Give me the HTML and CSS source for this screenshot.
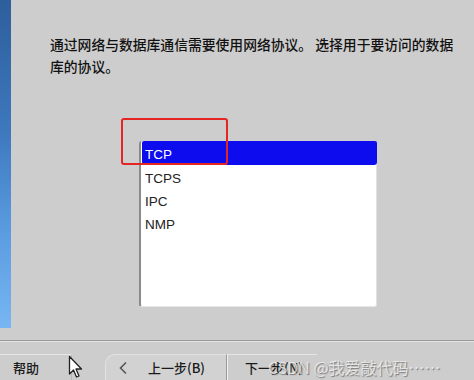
FILE: index.html
```html
<!DOCTYPE html>
<html lang="zh">
<head>
<meta charset="utf-8">
<link rel="stylesheet" href="styles.css">
</head>
<body>
<div class="window">
  <div class="main">
    <div class="sidebar"></div>
    <div class="content">
      <p class="intro">通过网络与数据库通信需要使用网络协议。 选择用于要访问的数据库的协议。</p>
      <div class="list-wrap">
        <ul class="listbox">
          <li class="item selected">TCP</li>
          <li class="item">TCPS</li>
          <li class="item">IPC</li>
          <li class="item">NMP</li>
        </ul>
        <div class="highlight"></div>
      </div>
    </div>
  </div>
  <div class="footer">
    <div class="btn help">帮助</div>
    <div class="btn prev">
      <svg class="chev" width="10" height="14" viewBox="0 0 10 14"><path d="M8 1.5 L2.5 7 L8 12.5" fill="none" stroke="#555" stroke-width="1.6"/></svg>
      <span>上一步(B)</span>
    </div>
    <div class="btn next">下一步(N)</div>
    <svg class="cursor" width="16" height="24" viewBox="0 0 16 24"><path d="M1.5 1.5 L1.5 19 L5.5 15 L8.5 22 L11 21 L8 14 L13.5 14 Z" fill="#fff" stroke="#222" stroke-width="1.3" stroke-linejoin="round"/></svg>
    <div class="watermark">CSDN @我爱敲代码……</div>
  </div>
</div>
</body>
</html>
```

FILE: styles.css
```css
html, body {
  margin: 0;
  padding: 0;
}
body {
  width: 474px;
  height: 380px;
  overflow: hidden;
  background: #cdcdcd;
  font-family: "Noto Sans CJK SC", "Liberation Sans", sans-serif;
}
.window {
  display: flex;
  flex-direction: column;
  height: 380px;
}
.main {
  display: flex;
  height: 340px;
  align-items: flex-start;
}
.sidebar {
  width: 11px;
  height: 328px;
  background: linear-gradient(180deg, #2d5f9c 0%, #3d78bd 40%, #5a9be0 70%, #77b6f2 100%);
  flex: none;
}
.content {
  flex: 1;
  padding-left: 39px;
}
.intro {
  margin: 33px 0 0 0;
  width: 412px;
  font-size: 13.8px;
  line-height: 22px;
  color: #111;
  font-weight: 500;
}
.list-wrap {
  position: relative;
  margin-top: 64px;
  margin-left: 89px;
  width: 238px;
}
.listbox {
  list-style: none;
  margin: 0;
  padding: 0 0 0 1px;
  height: 166px;
  background: #fff;
  border-left: 2px solid #8a8a8a;
  border-bottom: 1px solid #e6e6e6;
  border-right: 1px solid #e2e2e2;
  border-radius: 3px;
  box-sizing: border-box;
}
.item {
  height: 23px;
  line-height: 28px;
  padding-left: 3px;
  font-family: "Liberation Sans", Arial, sans-serif;
  font-size: 13.5px;
  color: #222;
}
.item.selected {
  height: 24px;
  line-height: 27px;
  background: #0c0cee;
  color: #fff;
  border-radius: 2px 2px 3px 3px;
  margin-right: -1px;
}
.highlight {
  position: absolute;
  left: -18px;
  top: -23px;
  width: 103px;
  height: 43px;
  border: 2px solid #e52424;
  border-radius: 3px;
}
.footer {
  position: relative;
  flex: 1;
  border-top: 1px solid #9a9a9a;
  box-shadow: inset 0 1px 0 #e4e4e4;
  display: flex;
  align-items: flex-end;
}
.btn {
  height: 26px;
  box-sizing: border-box;
  font-size: 13px;
  font-weight: 500;
  color: #1a1a1a;
  display: flex;
  align-items: center;
}
.help {
  width: 72px;
  padding-left: 13px;
  border-top: 1px solid #e6e6e6;
  border-right: 1px solid #b8b8b8;
}
.prev {
  margin-left: 33px;
  width: 122px;
  padding-left: 12px;
  border: 1px solid #e2e2e2;
  border-bottom: none;
  border-right: 1px solid #9a9a9a;
  border-radius: 10px 0 0 0;
  background: #d2d2d2;
}
.prev .chev {
  margin-right: 20px;
}
.next {
  width: 90px;
  padding-left: 17px;
  border-left: 1px solid #f0f0f0;
  border-top: 1px solid #e6e6e6;
}
.cursor {
  position: absolute;
  left: 68px;
  top: 14px;
}
.watermark {
  position: absolute;
  left: 268px;
  top: 14px;
  font-size: 16px;
  color: rgba(245, 245, 245, 0.75);
  text-shadow: 1px 1px 1px rgba(90, 90, 90, 0.7);
  white-space: nowrap;
}
```
